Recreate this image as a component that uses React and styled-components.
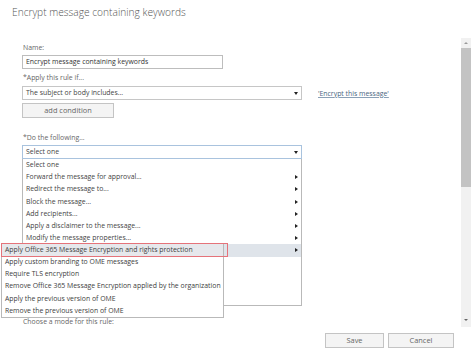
import styled, { createGlobalStyle, css } from "styled-components";

const GlobalStyle = createGlobalStyle`
  body {
    margin: 0;
    background: #fff;
    font-family: "Open Sans", "Noto Sans", sans-serif;
  }
`;

const Dialog = styled.div`
  width: 474px;
  height: 359px;
  display: flex;
  flex-direction: column;
  overflow: hidden;
  background: #fff;
`;

const Title = styled.h1`
  margin: 0;
  height: 38px;
  box-sizing: border-box;
  padding: 4px 0 0 12px;
  font-size: 10.2px;
  line-height: 16px;
  font-weight: 300;
  color: #555;
`;

const Body = styled.div`
  display: flex;
  height: 290px;
`;

const Form = styled.div`
  flex: 1;
  position: relative;
  padding: 4px 0 0 22px;
  overflow: hidden;
`;

const Label = styled.div`
  font-size: 6.9px;
  line-height: 12px;
  color: #666;
  margin-top: ${(p) => p.gap || 0}px;
  padding-left: 1px;
`;

const TextInput = styled.div`
  margin-top: 1px;
  width: 201px;
  height: 14px;
  box-sizing: border-box;
  border: 1px solid #bdbdbd;
  padding: 0 3px;
  font-size: 6.9px;
  line-height: 12px;
  color: #333;
`;

const SelectRow = styled.div`
  display: flex;
  align-items: center;
  gap: 16px;
  margin-top: 2px;
`;

const Select = styled.div`
  position: relative;
  width: 280px;
  height: 14px;
  box-sizing: border-box;
  border: 1px solid #c6c6c6;
  padding: 0 3px;
  font-size: 6.9px;
  line-height: 12px;
  color: #444;

  ${(p) =>
    p.open &&
    css`
      margin-top: 1px;
      border-color: #a9c3de;
    `}
`;

const DownCaret = styled.span`
  position: absolute;
  right: 3px;
  top: 5px;
  border-left: 2.5px solid transparent;
  border-right: 2.5px solid transparent;
  border-top: 3px solid #222;
`;

const Link = styled.a`
  font-size: 6.9px;
  color: #4a6580;
  text-decoration: underline;
  text-decoration-color: #8aa0b6;
`;

const Button = styled.button`
  display: block;
  width: ${(p) => p.w}px;
  height: 15px;
  box-sizing: border-box;
  border: 1px solid #c4c4c4;
  background: #f4f4f4;
  color: #666;
  font-family: inherit;
  font-size: 7.4px;
  line-height: 13px;
  padding: 0;
  margin-top: ${(p) => p.gap || 0}px;
`;

const List = styled.div`
  width: 280px;
  box-sizing: border-box;
  border: 1px solid #b9b9b9;
  border-top: none;
  background: #fff;
`;

const Item = styled.div`
  position: relative;
  height: 12.2px;
  padding-left: 3px;
  font-size: 6.9px;
  line-height: 12.2px;
  color: #444;
  white-space: nowrap;

  ${(p) =>
    p.hover &&
    css`
      background: #dfe4ea;
    `}
`;

const RightCaret = styled.span`
  position: absolute;
  right: 3px;
  top: 4px;
  border-top: 2.5px solid transparent;
  border-bottom: 2.5px solid transparent;
  border-left: 3px solid #222;
`;

const Flyout = styled.div`
  position: absolute;
  left: -22px;
  top: -1.5px;
  width: 223px;
  box-sizing: border-box;
  border: 1px solid #b9b9b9;
  background: #fff;
  z-index: 2;
`;

const FlyItem = styled(Item)`
  padding-left: 3px;
  color: #404040;

  ${(p) =>
    p.marked &&
    css`
      background: #e6e8ec;
      &::after {
        content: "";
        position: absolute;
        left: -1px;
        right: -5px;
        top: -1px;
        bottom: -1px;
        border: 1px solid #e5737a;
      }
    `}
`;

const Scrollbar = styled.div`
  width: 10px;
  margin-right: 3px;
  height: 289px;
  background: #f1f1f1;
  display: flex;
  flex-direction: column;
  align-items: center;
`;

const ScrollArrow = styled.div`
  height: 10px;
  width: 10px;
  display: flex;
  align-items: center;
  justify-content: center;

  &::before {
    content: "";
    border-left: 2px solid transparent;
    border-right: 2px solid transparent;
    ${(p) =>
      p.down
        ? css`
            border-top: 2.5px solid #666;
          `
        : css`
            border-bottom: 2.5px solid #999;
          `}
  }
`;

const ScrollEnd = styled.div`
  height: 2px;
`;

const Thumb = styled.div`
  width: 10px;
  height: 139px;
  background: #c3c3c3;
`;

const Track = styled.div`
  flex: 1;
`;

const Footer = styled.div`
  display: flex;
  justify-content: flex-end;
  gap: 4px;
  padding: 5px 20px 0 0;
`;

// rows from the hovered one on lie under the flyout, so no text is drawn there
const actions = [
  { label: "Select one" },
  { label: "Forward the message for approval...", sub: true },
  { label: "Redirect the message to...", sub: true },
  { label: "Block the message...", sub: true },
  { label: "Add recipients...", sub: true },
  { label: "Apply a disclaimer to the message...", sub: true },
  { label: "Modify the message properties...", sub: true },
  { label: "", sub: true, hover: true },
  { label: "" },
  { label: "" },
  { label: "" },
  { label: "" },
];

const security = [
  "Apply Office 365 Message Encryption and rights protection",
  "Apply custom branding to OME messages",
  "Require TLS encryption",
  "Remove Office 365 Message Encryption applied by the organization",
  "Apply the previous version of OME",
  "Remove the previous version of OME",
];

export default function App() {
  return (
    <Dialog>
      <GlobalStyle />
      <Title>Encrypt message containing keywords</Title>
      <Body>
        <Form>
          <Label>Name:</Label>
          <TextInput>Encrypt message containing keywords</TextInput>

          <Label gap={3}>*Apply this rule if...</Label>
          <SelectRow>
            <Select>
              The subject or body includes...
              <DownCaret />
            </Select>
            <Link>'Encrypt this message'</Link>
          </SelectRow>
          <Button w={92} gap={3}>
            add condition
          </Button>

          <Label gap={14}>*Do the following...</Label>
          <Select open>
            Select one
            <DownCaret />
          </Select>
          <List>
            {actions.map((a, i) => (
              <Item key={i} hover={a.hover}>
                {a.label}
                {a.sub && <RightCaret />}
                {a.hover && (
                  <Flyout>
                    {security.map((s, j) => (
                      <FlyItem key={s} marked={j === 0}>
                        {s}
                      </FlyItem>
                    ))}
                  </Flyout>
                )}
              </Item>
            ))}
          </List>

          <Label gap={10}>Choose a mode for this rule:</Label>
        </Form>
        <Scrollbar>
          <ScrollArrow />
          <Thumb />
          <Track />
          <ScrollArrow down />
          <ScrollEnd />
        </Scrollbar>
      </Body>
      <Footer>
        <Button w={59}>Save</Button>
        <Button w={66}>Cancel</Button>
      </Footer>
    </Dialog>
  );
}
